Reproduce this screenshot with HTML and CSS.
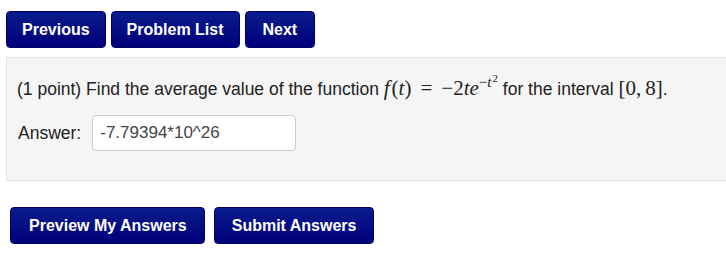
FILE: index.html
```html
<!DOCTYPE html>
<html>
<head>
<meta charset="utf-8">
<link rel="stylesheet" href="styles.css">
</head>
<body>
<div class="nav">
  <button class="btn">Previous</button>
  <button class="btn">Problem List</button>
  <button class="btn btn-next">Next</button>
</div>
<div class="problem">
  <p class="question">(1 point) Find the average value of the function <span class="math"><i>f</i><span class="paren">(</span><i>t</i>)<span class="op">=</span>−2<i>te</i><sup>−<i>t</i><sup>2</sup></sup></span> for the interval <span class="math">[0,<span class="thin"></span>8]</span>.</p>
  <div class="answer">
    <label>Answer:</label>
    <input type="text" value="-7.79394*10^26">
  </div>
</div>
<div class="submit">
  <button class="btn btn-preview">Preview My Answers</button>
  <button class="btn">Submit Answers</button>
</div>
</body>
</html>
```

FILE: styles.css
```css
html, body {
  margin: 0;
  padding: 0;
  background: #fff;
  overflow: hidden;
}
body {
  font-family: "Liberation Sans", Arial, sans-serif;
  font-size: 17.5px;
  color: #222;
}
.btn {
  font-family: "Liberation Sans", Arial, sans-serif;
  font-weight: bold;
  font-size: 16px;
  color: #fff;
  background: linear-gradient(#0a1c8c, #00007a);
  border: 1px solid #000066;
  border-radius: 4px;
  height: 37px;
  padding: 0 15px;
  margin: 0;
  cursor: pointer;
}
.nav {
  display: flex;
  gap: 5px;
  padding: 11px 0 0 6px;
}
.nav .btn-next {
  padding: 0 17px;
}
.problem {
  margin: 9px -10px 0 6px;
  background: #f5f5f5;
  border: 1px solid #e3e3e3;
  height: 124px;
  box-sizing: border-box;
  padding: 0 0 0 10px;
}
.question {
  margin: 19px 0 0 0;
  line-height: 22px;
  font-size: 17.5px;
}
.math {
  font-family: "Liberation Serif", "Times New Roman", serif;
  font-size: 21px;
}
.math .paren {
  margin-left: 2px;
}
.math .op {
  margin: 0 9px;
}
.math .thin {
  display: inline-block;
  width: 4px;
}
.math sup {
  font-size: 15px;
  vertical-align: 8px;
  line-height: 0;
}
.math sup sup {
  font-size: 11px;
  vertical-align: 5px;
  margin-left: 1px;
}
.answer {
  display: flex;
  align-items: center;
  gap: 11px;
  margin-top: 15px;
  padding-left: 1px;
}
.answer label {
  font-size: 17.5px;
}
.answer input {
  width: 204px;
  height: 36px;
  box-sizing: border-box;
  border: 1px solid #ccc;
  border-radius: 4px;
  padding: 0 7px;
  font-family: "Liberation Sans", Arial, sans-serif;
  font-size: 17px;
  color: #444;
  background: #fff;
}
.submit {
  display: flex;
  gap: 9px;
  padding: 26px 0 0 10px;
}
.submit .btn {
  padding: 0 17px;
}
.submit .btn-preview {
  padding: 0 17px 0 18px;
}
```
